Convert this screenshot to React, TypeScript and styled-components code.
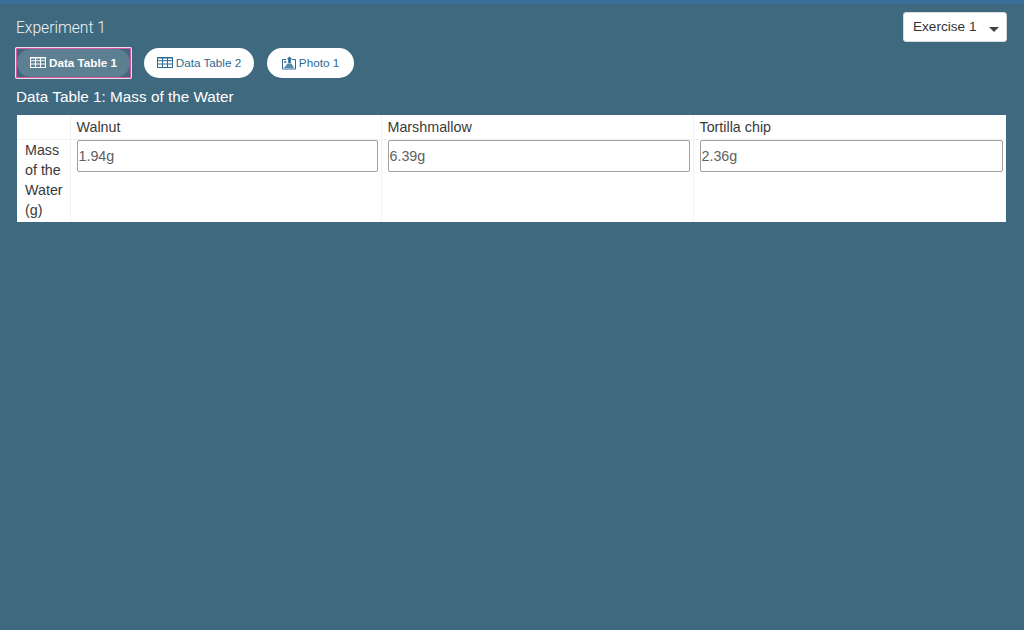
import styled, { createGlobalStyle } from "styled-components";

const GlobalStyle = createGlobalStyle`
  html, body {
    margin: 0;
    height: 100%;
    background: #3f697f;
    font-family: "Liberation Sans", Arial, sans-serif;
  }
`;

const Page = styled.div`
  height: 630px;
  box-sizing: border-box;
  border-top: 4px solid #386f9c;
  padding: 8px 17px 0 16px;
`;

const TopRow = styled.div`
  display: flex;
  justify-content: space-between;
  align-items: flex-start;
`;

const Heading = styled.h1`
  margin: 6px 0 0;
  font-family: Roboto, "Liberation Sans", sans-serif;
  font-size: 15.6px;
  line-height: 20px;
  font-weight: 300;
  color: #f2f5f7;
`;

const ExerciseSelect = styled.div`
  box-sizing: border-box;
  width: 104px;
  height: 30px;
  padding: 0 7px 1px 9px;
  display: flex;
  align-items: center;
  justify-content: space-between;
  background: #fff;
  border: 1px solid #d4dce1;
  border-radius: 3px;
  color: #333;
  font-size: 13.6px;
`;

const Caret = styled.span`
  width: 0;
  height: 0;
  margin-top: 5px;
  border-left: 5px solid transparent;
  border-right: 5px solid transparent;
  border-top: 5px solid #444;
`;

const Tabs = styled.div`
  display: flex;
  align-items: center;
  margin-top: 5px;
`;

const TabFrame = styled.div<{ $active?: boolean }>`
  box-sizing: border-box;
  margin-left: ${(p) => (p.$active ? "-1px" : "0")};
  margin-right: ${(p) => (p.$active ? "12px" : "13px")};
  padding: ${(p) => (p.$active ? "2px" : "0")};
  border-radius: 2px;
  box-shadow: ${(p) =>
    p.$active ? "inset 0 0 0 1px #f1d9e7, inset 0 0 0 2px #d5589f" : "none"};
`;

const Tab = styled.button<{ $active?: boolean; $width: number }>`
  box-sizing: border-box;
  width: ${(p) => p.$width}px;
  height: ${(p) => (p.$active ? 28 : 30)}px;
  padding: 0 0 1px;
  display: flex;
  align-items: center;
  justify-content: center;
  gap: 3px;
  border: none;
  border-radius: 15px;
  background: ${(p) => (p.$active ? "#5d7f92" : "#fff")};
  color: ${(p) => (p.$active ? "#fff" : "#2c6a94")};
  font-family: "Liberation Sans", Arial, sans-serif;
  font-size: 11.7px;
  font-weight: ${(p) => (p.$active ? 700 : 400)};
`;

const SectionTitle = styled.h2`
  margin: 8px 0 0;
  font-size: 15.3px;
  line-height: 20px;
  font-weight: 400;
  color: #fff;
`;

const Table = styled.table`
  width: 989px;
  height: 107px;
  margin: 8px 0 0 1px;
  table-layout: fixed;
  border-collapse: collapse;
  background: #fff;
  color: #3a3a3a;
  font-size: 14.3px;
`;

const HeadCell = styled.th`
  height: 24px;
  padding: 0 6px;
  box-sizing: border-box;
  border-right: 1px solid #f2f2f2;
  border-bottom: 1px solid #f2f2f2;
  text-align: left;
  font-weight: 400;
  &:last-child {
    border-right: none;
  }
`;

const RowLabel = styled.th`
  padding: 0 6px 0 8px;
  box-sizing: border-box;
  border-right: 1px solid #f2f2f2;
  text-align: left;
  font-weight: 400;
  line-height: 20px;
  vertical-align: top;
`;

const ValueCell = styled.td`
  padding: 0 3px 0 6px;
  box-sizing: border-box;
  border-right: 1px solid #f2f2f2;
  vertical-align: top;
  &:last-child {
    border-right: none;
  }
`;

const ValueInput = styled.input`
  display: block;
  box-sizing: border-box;
  width: 100%;
  height: 32px;
  padding: 0 1px;
  border: 1px solid #a0a0a0;
  border-radius: 2px;
  background: #fff;
  color: #606060;
  font-family: "Liberation Sans", Arial, sans-serif;
  font-size: 14.3px;
`;

const TableIcon = ({ color }: { color: string }) => (
  <svg width="16" height="11" viewBox="0 0 16 11" fill="none" stroke={color} strokeWidth="1">
    <rect x="0.5" y="0.5" width="15" height="10" />
    <path d="M0.5 1H15.5" />
    <path d="M0.5 3.7H15.5M0.5 7H15.5M5.5 0.5V10.5M10.5 0.5V10.5" />
  </svg>
);

const PhotoIcon = ({ color }: { color: string }) => (
  <svg width="14" height="14" viewBox="0 0 14 14" fill="none">
    <path d="M4 3.5H0.5V13H13.5V3.5H10" stroke={color} strokeWidth="1" />
    <path d="M7.5 0.5L10.2 3.3H8.8V7H6.2V3.3H4.8Z" fill={color} />
    <path d="M2 12L5.5 7.5H9.5L12 12Z" fill={color} opacity="0.8" />
    <circle cx="3.2" cy="6" r="1.1" fill={color} />
  </svg>
);

const columns = [
  { name: "Walnut", value: "1.94g" },
  { name: "Marshmallow", value: "6.39g" },
  { name: "Tortilla chip", value: "2.36g" },
];

export default function App() {
  return (
    <>
      <GlobalStyle />
      <Page>
        <TopRow>
          <Heading>Experiment 1</Heading>
          <ExerciseSelect>
            Exercise 1
            <Caret />
          </ExerciseSelect>
        </TopRow>
        <Tabs>
          <TabFrame $active>
            <Tab $active $width={113}>
              <TableIcon color="#fff" />
              Data Table 1
            </Tab>
          </TabFrame>
          <TabFrame>
            <Tab $width={110}>
              <TableIcon color="#2c6a94" />
              Data Table 2
            </Tab>
          </TabFrame>
          <TabFrame>
            <Tab $width={87}>
              <PhotoIcon color="#2c6a94" />
              Photo 1
            </Tab>
          </TabFrame>
        </Tabs>
        <SectionTitle>Data Table 1: Mass of the Water</SectionTitle>
        <Table>
          <colgroup>
            <col width="53" />
            <col width="311" />
            <col width="312" />
            <col width="313" />
          </colgroup>
          <thead>
            <tr>
              <HeadCell />
              {columns.map((c) => (
                <HeadCell key={c.name}>{c.name}</HeadCell>
              ))}
            </tr>
          </thead>
          <tbody>
            <tr>
              <RowLabel>Mass of the Water (g)</RowLabel>
              {columns.map((c) => (
                <ValueCell key={c.name}>
                  <ValueInput defaultValue={c.value} />
                </ValueCell>
              ))}
            </tr>
          </tbody>
        </Table>
      </Page>
    </>
  );
}
